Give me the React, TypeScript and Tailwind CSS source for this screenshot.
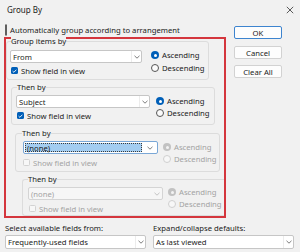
import React from "react";

const Chevron = ({ disabled }: { disabled?: boolean }) => (
  <svg width="6" height="4" viewBox="0 0 6 4" className="block">
    <polyline points="0.5,0.8 3,3.2 5.5,0.8" fill="none" stroke={disabled ? "#b5b5b5" : "#5c5c5c"} strokeWidth="0.8" />
  </svg>
);

const Radio = ({ checked, disabled }: { checked?: boolean; disabled?: boolean }) => {
  if (checked && !disabled)
    return (
      <span className="w-[8px] h-[8px] rounded-full bg-[#005fb8] flex items-center justify-center shrink-0">
        <span className="w-[3px] h-[3px] rounded-full bg-white" />
      </span>
    );
  if (checked && disabled)
    return (
      <span className="w-[8px] h-[8px] rounded-full bg-[#c2c2c2] flex items-center justify-center shrink-0">
        <span className="w-[3px] h-[3px] rounded-full bg-[#f3f3f3]" />
      </span>
    );
  if (disabled) return <span className="w-[8px] h-[8px] rounded-full border border-[#d0d0d0] bg-[#f7f7f7] shrink-0" />;
  return <span className="w-[8px] h-[8px] rounded-full border border-[#555555] bg-[#fbfbfb] shrink-0" />;
};

const Check = ({ checked, disabled }: { checked?: boolean; disabled?: boolean }) => {
  if (checked)
    return (
      <span className="w-[7px] h-[7px] rounded-[1.5px] bg-[#005fb8] flex items-center justify-center shrink-0">
        <svg width="5" height="4" viewBox="0 0 5 4">
          <polyline points="0.6,2.1 1.9,3.3 4.4,0.7" fill="none" stroke="#fff" strokeWidth="0.9" />
        </svg>
      </span>
    );
  if (disabled) return <span className="w-[7px] h-[7px] rounded-[1.5px] border border-[#d2d2d2] bg-[#f7f7f7] shrink-0" />;
  return <span className="w-[8px] h-[8px] rounded-[2px] border border-[#5f5f5f] bg-white shrink-0" />;
};

const RadioRow = ({ label, checked, disabled }: { label: string; checked?: boolean; disabled?: boolean }) => (
  <div className="flex items-center h-[10px]">
    <Radio checked={checked} disabled={disabled} />
    <span className={`ml-[3px] ${disabled ? "text-[#a3a3a3]" : ""}`}>{label}</span>
  </div>
);

export default function App() {
  return (
    <div className="w-[300px] h-[252px] bg-[#f1f1f1] text-[#1b1b1b] text-[7.7px] leading-[10px] font-['Noto_Sans',sans-serif] overflow-hidden flex flex-col">
      {/* Title bar */}
      <div className="h-[20px] shrink-0 flex items-center justify-between pl-[7px] pr-[6px]">
        <span className="text-[8px]">Group By</span>
        <svg width="8" height="8" viewBox="0 0 8 8">
          <path d="M0.8 0.8 L7.2 7.2 M7.2 0.8 L0.8 7.2" stroke="#333" strokeWidth="0.8" fill="none" />
        </svg>
      </div>

      {/* Main */}
      <div className="flex pl-[4px] shrink-0">
        <div className="w-[222px] flex flex-col">
          <div className="mt-[6px] h-[8px] flex items-center">
            <span className="ml-[1px]"><Check /></span>
            <span className="ml-[3px]">Automatically group according to arrangement</span>
          </div>

          <div className="mt-[3px] h-[181px] border-2 border-[#d4363d] flex flex-col">
            {/* G1 */}
            <div className="relative mt-[2px] w-[203px] h-[39px] border border-[#dcdcdc] rounded-[3px] shrink-0">
              <span className="absolute left-[4px] -top-[6px] bg-[#f1f1f1] leading-[10px]">Group items by</span>
              <div className="flex pt-[8px] pl-[3px]">
                <div className="flex flex-col">
                  <div className="w-[132px] h-[13px] bg-white border border-[#c6c6c6] rounded-[2px] flex items-center">
                    <span className="flex-1 pl-[2px]">From</span>
                    <span className="w-[10px] h-full border-l border-[#ececec] flex items-center justify-center"><Chevron /></span>
                  </div>
                  <div className="mt-[4px] h-[7px] flex items-center ml-[1px]">
                    <Check checked />
                    <span className="ml-[3px]">Show field in view</span>
                  </div>
                </div>
                <div className="ml-[9px] flex flex-col gap-[3px]">
                  <RadioRow label="Ascending" checked />
                  <RadioRow label="Descending" />
                </div>
              </div>
            </div>

            {/* G2 */}
            <div className="relative mt-[7px] ml-[5px] w-[204px] h-[38px] border border-[#dcdcdc] rounded-[3px] shrink-0">
              <span className="absolute left-[5px] -top-[6px] bg-[#f1f1f1] leading-[10px]">Then by</span>
              <div className="flex pt-[7px] pl-[4px]">
                <div className="flex flex-col">
                  <div className="w-[134px] h-[13px] bg-white border border-[#c6c6c6] rounded-[2px] flex items-center">
                    <span className="flex-1 pl-[2px]">Subject</span>
                    <span className="w-[10px] h-full border-l border-[#ececec] flex items-center justify-center"><Chevron /></span>
                  </div>
                  <div className="mt-[4px] h-[7px] flex items-center ml-[1px]">
                    <Check checked />
                    <span className="ml-[3px]">Show field in view</span>
                  </div>
                </div>
                <div className="ml-[6px] mt-[1px] flex flex-col gap-[2px]">
                  <RadioRow label="Ascending" checked />
                  <RadioRow label="Descending" />
                </div>
              </div>
            </div>

            {/* G3 */}
            <div className="relative mt-[8px] ml-[9px] w-[205px] h-[39px] border border-[#dcdcdc] rounded-[3px] shrink-0">
              <span className="absolute left-[6px] -top-[6px] bg-[#f1f1f1] leading-[10px]">Then by</span>
              <div className="flex pt-[7px] pl-[7px]">
                <div className="flex flex-col">
                  <div className="w-[135px] h-[13px] bg-white border border-[#7aa7d6] rounded-[2px] flex items-center">
                    <span className="flex-1 h-full p-[1px]">
                      <span className="block h-full bg-[#a3cdf1] border border-dotted border-[#3a3a3a] pl-[1px] leading-[8px]">(none)</span>
                    </span>
                    <span className="w-[14px] h-full flex items-center justify-center"><Chevron /></span>
                  </div>
                  <div className="mt-[5px] h-[7px] flex items-center">
                    <Check disabled />
                    <span className="ml-[3px] text-[#a3a3a3]">Show field in view</span>
                  </div>
                </div>
                <div className="ml-[5px] mt-[1px] flex flex-col gap-[2px]">
                  <RadioRow label="Ascending" checked disabled />
                  <RadioRow label="Descending" disabled />
                </div>
              </div>
            </div>

            {/* G4 */}
            <div className="relative mt-[7px] ml-[16px] w-[202px] h-[37px] border border-r-0 border-[#dcdcdc] rounded-l-[3px] shrink-0">
              <span className="absolute left-[5px] -top-[6px] bg-[#f1f1f1] leading-[10px]">Then by</span>
              <div className="flex pt-[7px] pl-[5px]">
                <div className="flex flex-col">
                  <div className="w-[135px] h-[13px] bg-[#f6f6f6] border border-[#d4d4d4] rounded-[2px] flex items-center">
                    <span className="flex-1 pl-[2px] text-[#a3a3a3]">(none)</span>
                    <span className="w-[10px] h-full flex items-center justify-center"><Chevron disabled /></span>
                  </div>
                  <div className="mt-[5px] h-[7px] flex items-center ml-[1px]">
                    <Check disabled />
                    <span className="ml-[3px] text-[#a3a3a3]">Show field in view</span>
                  </div>
                </div>
                <div className="ml-[5px] flex flex-col gap-[2px]">
                  <RadioRow label="Ascending" checked disabled />
                  <RadioRow label="Descending" disabled />
                </div>
              </div>
            </div>
          </div>
        </div>

        {/* Buttons */}
        <div className="ml-[8px] w-[48px] flex flex-col">
          <button className="mt-[6px] h-[13px] rounded-[2px] border border-[#3d84cf] bg-[#fdfdfd] flex items-center justify-center">OK</button>
          <button className="mt-[7px] h-[13px] rounded-[2px] border border-[#d2d2d2] bg-[#fdfdfd] flex items-center justify-center">Cancel</button>
          <button className="mt-[6px] h-[13px] rounded-[2px] border border-[#d2d2d2] bg-[#fdfdfd] flex items-center justify-center">Clear All</button>
        </div>
      </div>

      {/* Bottom */}
      <div className="mt-[5px] flex pl-[5px] gap-[7px]">
        <div className="w-[141px] flex flex-col">
          <span className="h-[10px]">Select available fields from:</span>
          <div className="mt-[2px] h-[14px] bg-white border border-[#c6c6c6] rounded-[2px] flex items-center">
            <span className="flex-1 pl-[2px]">Frequently-used fields</span>
            <span className="w-[10px] h-full border-l border-[#ececec] flex items-center justify-center"><Chevron /></span>
          </div>
        </div>
        <div className="w-[141px] flex flex-col">
          <span className="h-[10px]">Expand/collapse defaults:</span>
          <div className="mt-[2px] h-[14px] bg-white border border-[#c6c6c6] rounded-[2px] flex items-center">
            <span className="flex-1 pl-[2px]">As last viewed</span>
            <span className="w-[10px] h-full border-l border-[#ececec] flex items-center justify-center"><Chevron /></span>
          </div>
        </div>
      </div>
    </div>
  );
}
